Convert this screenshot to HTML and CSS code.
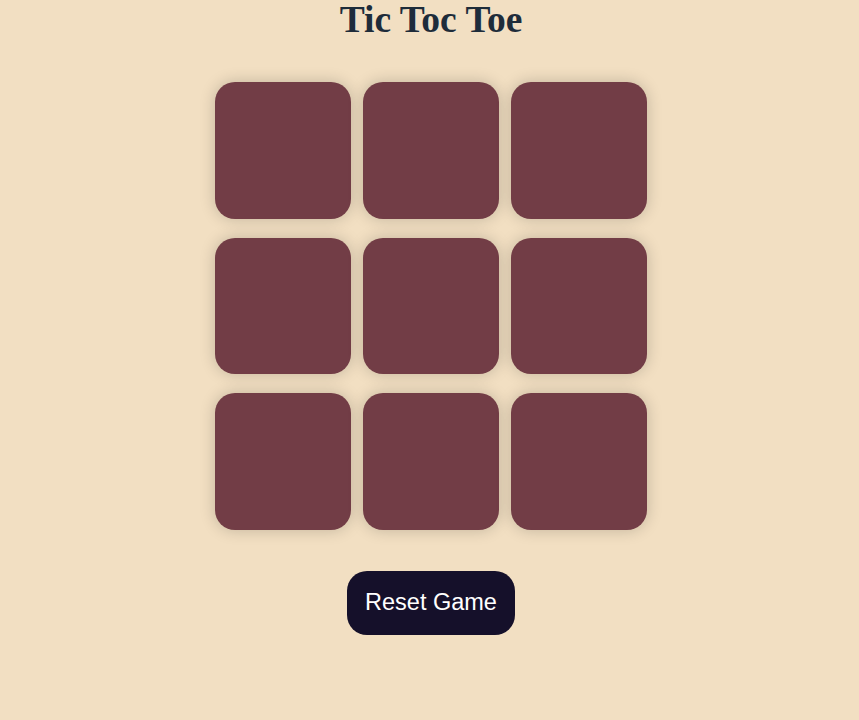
FILE: index.html
```html
<!DOCTYPE html>
<html>
<head>
<meta charset="utf-8">
<title>Tic Toc Toe</title>
<link rel="stylesheet" href="styles.css">
</head>
<body>
<main class="container">
  <h1 class="title">Tic Toc Toe</h1>
  <div class="game">
    <button class="box"></button>
    <button class="box"></button>
    <button class="box"></button>
    <button class="box"></button>
    <button class="box"></button>
    <button class="box"></button>
    <button class="box"></button>
    <button class="box"></button>
    <button class="box"></button>
  </div>
  <button class="reset">Reset Game</button>
</main>
</body>
</html>
```

FILE: styles.css
```css
* {
  box-sizing: border-box;
}
html, body {
  margin: 0;
  padding: 0;
}
body {
  background: #f2dfc2;
  height: 720px;
  overflow: hidden;
}
.container {
  display: flex;
  flex-direction: column;
  align-items: center;
  padding-left: 3px;
}
.title {
  margin: 0;
  font-family: "Liberation Serif", "Times New Roman", serif;
  font-weight: bold;
  font-size: 37.5px;
  line-height: 40px;
  color: #1e2c3a;
  height: 40px;
}
.game {
  margin-top: 42px;
  display: grid;
  grid-template-columns: repeat(3, 136px);
  grid-template-rows: repeat(3, 136.5px);
  column-gap: 12px;
  row-gap: 19px;
}
.box {
  border: none;
  border-radius: 20px;
  background: #723d46;
  box-shadow: 0 0 16px rgba(0, 0, 0, 0.2);
  padding: 0;
}
.reset {
  margin-top: 41px;
  height: 64px;
  width: 168px;
  border: none;
  border-radius: 20px;
  background: #15102a;
  color: #ffffff;
  font-family: "Liberation Sans", Arial, sans-serif;
  font-size: 23.5px;
  padding: 0;
}
```
